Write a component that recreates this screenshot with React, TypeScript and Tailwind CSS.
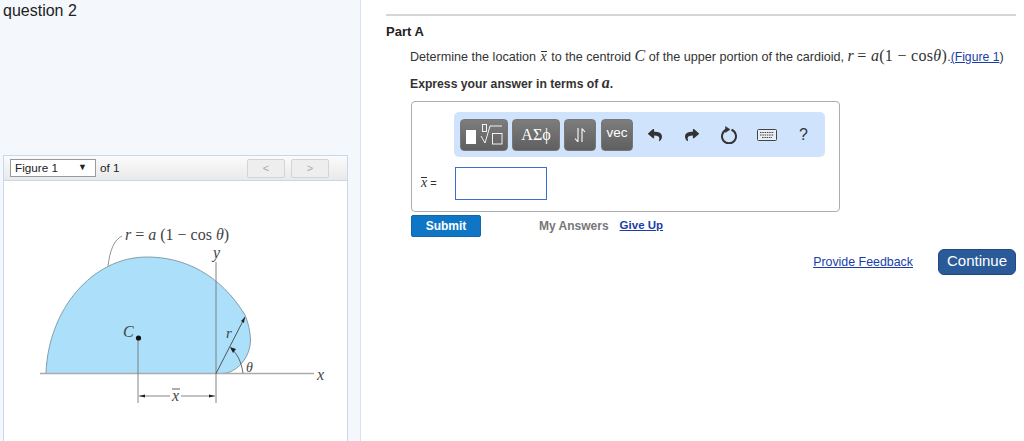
import React from 'react';
import { FaReply, FaShare } from 'react-icons/fa';

const XBar = () => (
  <span className="inline-block font-['Liberation_Serif',serif] italic text-[14px] leading-[9px] border-t border-[#333]">x</span>
);

const MathVar = ({ children }: { children: React.ReactNode }) => (
  <span className="font-['Liberation_Serif',serif] italic text-[16px] leading-none">{children}</span>
);

const ToolButton = ({ className, children }: { className: string; children: React.ReactNode }) => (
  <div className={`h-8 flex items-center justify-center rounded-[4px] border border-[#777] bg-gradient-to-b from-[#7d7d7d] to-[#5f5f5f] text-white ${className}`}>
    {children}
  </div>
);

const FigurePanel = () => (
  <div className="mt-[134px] ml-[3px] w-[345px] flex-1 border border-b-0 border-[#c5d8ee] bg-white flex flex-col">
    <div className="h-[25px] flex items-center pl-[6px] pr-[18px] bg-gradient-to-b from-[#fbfbfb] to-[#e9e9e9] border-b border-[#c5d8ee] text-[11.7px] text-[#222]">
      <div className="w-[86px] h-[18px] bg-white border border-[#9a9a9a] flex items-center justify-between pl-1 pr-2">
        <span>Figure 1</span>
        <span className="text-[9px]">▼</span>
      </div>
      <span className="ml-1">of 1</span>
      <div className="ml-auto flex gap-[6px]">
        <div className="w-[38px] h-[19px] border border-[#d4d4d4] rounded-[2px] bg-[#eeeeee] flex items-center justify-center text-[11px] text-[#aaa]">&lt;</div>
        <div className="w-[38px] h-[19px] border border-[#d4d4d4] rounded-[2px] bg-[#eeeeee] flex items-center justify-center text-[11px] text-[#aaa]">&gt;</div>
      </div>
    </div>
    <svg viewBox="4 181 343 260" className="w-[343px] h-[260px] block">
      <path d="M46 373.5C48 310 92 257 147 257C184 257 220 274 245 315C248 322 250.500 332 250.500 340C250.500 358 236 373.500 222 373.500Z" fill="#abdffa" stroke="#6f8a96" strokeWidth="0.8" />
      <path d="M108 266C110 250 114 240 122 236" fill="none" stroke="#777" strokeWidth="0.8" />
      <line x1="40" y1="373.500" x2="314" y2="373.500" stroke="#aaa" strokeWidth="1.3" />
      <line x1="216" y1="262" x2="216" y2="403" stroke="#777" strokeWidth="0.9" />
      <line x1="138" y1="338" x2="138" y2="403" stroke="#777" strokeWidth="0.9" />
      <circle cx="138.500" cy="338" r="2.600" fill="#111" />
      <line x1="216" y1="373.500" x2="245" y2="317" stroke="#444" strokeWidth="0.9" />
      <path d="M245 317L244 323L241 321Z" fill="#222" />
      <path d="M231 349C237 353 241 361 243 373" fill="none" stroke="#444" strokeWidth="0.8" />
      <path d="M230 347L236 349L233 353Z" fill="#222" />
      <line x1="139" y1="396" x2="170" y2="396" stroke="#666" strokeWidth="0.8" />
      <line x1="181" y1="396" x2="215" y2="396" stroke="#666" strokeWidth="0.8" />
      <path d="M139 396L145 394.500V397.500Z" fill="#222" />
      <path d="M215 396L209 394.500V397.500Z" fill="#222" />
      <g fontFamily="'Liberation Serif', serif" fill="#444">
        <text x="125" y="240" fontSize="16" xmlSpace="preserve">
          <tspan fontStyle="italic">r</tspan> = <tspan fontStyle="italic">a</tspan> (1 − cos <tspan fontStyle="italic">θ</tspan>)
        </text>
        <text x="213" y="258" fontSize="16" fontStyle="italic">y</text>
        <text x="123" y="337" fontSize="16" fontStyle="italic">C</text>
        <text x="226" y="338" fontSize="15" fontStyle="italic">r</text>
        <text x="246" y="372" fontSize="14" fontStyle="italic">θ</text>
        <text x="317" y="380" fontSize="16" fontStyle="italic">x</text>
        <text x="172" y="401" fontSize="16" fontStyle="italic">x</text>
        <line x1="172" y1="389" x2="180" y2="389" stroke="#333" strokeWidth="0.8" />
      </g>
    </svg>
  </div>
);

const Toolbar = () => (
  <div className="ml-[42px] w-[371px] h-[45px] rounded-[5px] bg-[#cfe4fc] flex items-center pl-[6px] text-[#333]">
    <ToolButton className="w-[48px]">
      <svg width="42" height="26" viewBox="0 0 42 26" fill="none" stroke="#fff" strokeWidth="0.9">
        <rect x="3" y="8" width="10" height="14" fill="#fff" stroke="none" />
        <rect x="19.500" y="2.500" width="4" height="7" />
        <path d="M18 14L22 21L27 4H39" />
        <rect x="29.500" y="11.500" width="9.500" height="10.500" />
      </svg>
    </ToolButton>
    <ToolButton className="w-[48px] ml-[4px] font-['Liberation_Serif',serif] text-[16px]">ΑΣϕ</ToolButton>
    <ToolButton className="w-[32px] ml-[4px]">
      <svg width="16" height="18" viewBox="0 0 16 18" fill="none" stroke="#fff" strokeWidth="1.1">
        <path d="M6 2V15.500M3 12.500L6 16" />
        <path d="M10 16V2.500M10 2.500L13 6" />
      </svg>
    </ToolButton>
    <ToolButton className="w-[32px] ml-[5px] text-[13.5px] pb-[2px]">vec</ToolButton>
    <FaReply className="ml-[15px] w-[14px] h-[14px] text-[#333]" />
    <FaShare className="ml-[23px] w-[14px] h-[14px] text-[#333]" />
    <svg className="ml-[21px]" width="18" height="18" viewBox="0 0 18 18" fill="none" stroke="#333" strokeWidth="2">
      <path d="M6.500 3.800A7 7 0 1 0 11.500 3.800" />
      <path d="M5.500 0.500L10 3.500L5.500 6.500Z" fill="#333" strokeWidth="0.5" />
    </svg>
    <svg className="ml-[19px]" width="20" height="12" viewBox="0 0 20 12" fill="#e9eef4" stroke="#444" strokeWidth="1">
      <rect x="0.500" y="0.500" width="19" height="11" rx="1" />
      <path d="M3 3.500H17M3 6H17M5 8.500H15" strokeDasharray="1.500 0.800" fill="none" />
    </svg>
    <span className="ml-[22px] text-[16px]">?</span>
  </div>
);

export default function App() {
  return (
    <div className="h-[441px] w-[1024px] overflow-hidden flex bg-white font-['Liberation_Sans',sans-serif] text-[#333]">
      <div className="w-[361px] shrink-0 h-full bg-[#f4f8fd] border-r border-[#d3e1f1] flex flex-col">
        <div className="pl-[3px] pt-[1px] text-[16px] leading-[20px] h-[21px] text-[#222]">question 2</div>
        <FigurePanel />
      </div>

      <div className="flex-1 pl-[25px] pr-2 pt-[14px]">
        <div className="h-[2px] bg-[#d6d6d6]" />
        <div className="mt-[8px] text-[13px] leading-[16px] font-bold text-[#222]">Part A</div>
        <div className="ml-[24px] mt-[8px] h-[16px] text-[12.6px] leading-[16px] whitespace-nowrap">
          Determine the location <span className="mx-[1px]"><XBar /></span> to the centroid <MathVar>C</MathVar> of the upper portion of the cardioid,{' '}
          <MathVar>r</MathVar> <span className="font-['Liberation_Serif',serif] text-[16px] leading-none tracking-[0.3px]">= <i>a</i>(1 − cos<i>θ</i>)</span>.
          <a className="text-[12.2px] text-[#1a3ea8] underline">(Figure 1</a>)
        </div>
        <div className="ml-[24px] mt-[11px] h-[16px] text-[12.2px] leading-[16px] font-bold">
          Express your answer in terms of <MathVar>a</MathVar>.
        </div>

        <div className="ml-[25px] mt-[10px] w-[429px] h-[111px] border border-[#adadad] rounded-[4px] pt-[10px]">
          <Toolbar />
          <div className="flex items-center mt-[10px] pl-[9px]">
            <span className="w-[34px] text-[11px]"><XBar /> =</span>
            <div className="w-[92px] h-[33px] border border-[#3a6ed6] bg-white" />
          </div>
        </div>

        <div className="ml-[25px] mt-[2px] flex items-center h-[23px]">
          <div className="w-[70px] h-[22px] rounded-[2px] bg-[#0f76c6] border border-[#0e68ad] text-white text-[12px] font-bold flex items-center justify-center">Submit</div>
          <span className="ml-[58px] text-[12px] font-bold text-[#777]">My Answers</span>
          <a className="ml-[11px] text-[11.5px] font-bold text-[#1a3ea8] underline">Give Up</a>
        </div>

        <div className="mt-[12px] flex items-center justify-end pr-0 w-[630px]">
          <a className="text-[12.4px] text-[#1a3ea8] underline">Provide Feedback</a>
          <div className="ml-[25px] w-[78px] h-[26px] rounded-[6px] bg-[#2a5a98] border border-[#1f4a80] text-white text-[15px] flex items-center justify-center pb-[1px]">Continue</div>
        </div>
      </div>
    </div>
  );
}
